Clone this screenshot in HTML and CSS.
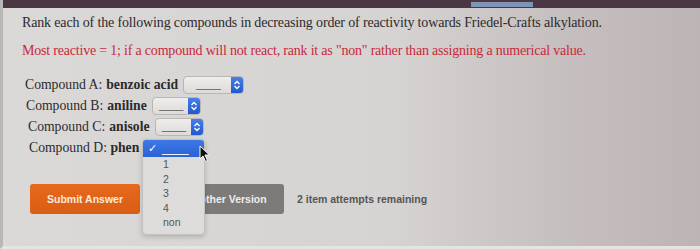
FILE: index.html
```html
<!DOCTYPE html>
<html>
<head>
<meta charset="utf-8">
<link rel="stylesheet" href="styles.css">
</head>
<body>
<div class="page">
  <div class="topbar"><span class="tab"></span></div>
  <div class="content">
    <p class="q">Rank each of the following compounds in decreasing order of reactivity towards Friedel-Crafts alkylation.</p>
    <p class="note">Most reactive = 1; if a compound will not react, rank it as "non" rather than assigning a numerical value.</p>
    <div class="list">
      <div class="row row-a">Compound A: <b>benzoic acid</b>
        <span class="sel"><span class="blank">____</span><span class="arrows"><svg width="8" height="10" viewBox="0 0 8 10"><path d="M1.5 4 L4 1.5 L6.5 4 M1.5 6 L4 8.5 L6.5 6" fill="none" stroke="#fff" stroke-width="1.3"/></svg></span></span>
      </div>
      <div class="row row-b">Compound B: <b>aniline</b>
        <span class="sel"><span class="blank">____</span><span class="arrows"><svg width="8" height="10" viewBox="0 0 8 10"><path d="M1.5 4 L4 1.5 L6.5 4 M1.5 6 L4 8.5 L6.5 6" fill="none" stroke="#fff" stroke-width="1.3"/></svg></span></span>
      </div>
      <div class="row row-c">Compound C: <b>anisole</b>
        <span class="sel"><span class="blank">____</span><span class="arrows"><svg width="8" height="10" viewBox="0 0 8 10"><path d="M1.5 4 L4 1.5 L6.5 4 M1.5 6 L4 8.5 L6.5 6" fill="none" stroke="#fff" stroke-width="1.3"/></svg></span></span>
      </div>
      <div class="row row-d"><span class="dlabel">Compound D: <b>phen</b></span>
        <div class="menu">
          <div class="opt current"><span class="check">✓</span><span class="uline">____</span></div>
          <div class="opt">1</div>
          <div class="opt">2</div>
          <div class="opt">3</div>
          <div class="opt">4</div>
          <div class="opt">non</div>
          <svg class="cursor" width="12" height="18" viewBox="0 0 12 18"><path d="M1 1 L1 14 L4 11 L6.5 16.5 L8.5 15.5 L6 10 L10.5 10 Z" fill="#111" stroke="#fff" stroke-width="1"/></svg>
        </div>
      </div>
    </div>
    <div class="actions">
      <span class="btn submit">Submit Answer</span>
      <span class="btn other">Try Another Version</span>
      <span class="attempts">2 item attempts remaining</span>
    </div>
  </div>
</div>
</body>
</html>
```
FILE: styles.css
```css
html, body {
  margin: 0;
  padding: 0;
}
body {
  width: 700px;
  height: 249px;
  overflow: hidden;
}
.page {
  width: 700px;
  height: 249px;
  background: linear-gradient(90deg, #dad9d7 0%, #d6d4d2 55%, #c6bfbf 80%, #bdb4b5 100%);
  position: relative;
  overflow: hidden;
  border-left: 3px solid #b9b7b6;
  border-bottom: 3px solid #e6e4e2;
  box-sizing: border-box;
}
.topbar {
  height: 8px;
  background: #4b3744;
  display: flex;
  align-items: flex-start;
}
.tab {
  margin-left: 468px;
  width: 62px;
  height: 5px;
  margin-top: 2px;
  background: #7f93b4;
}
.content {
  padding: 7px 0 0 19px;
  font-family: "Liberation Serif", "Times New Roman", serif;
  font-size: 14px;
  color: #2c2a2c;
}
.q {
  margin: 0;
  letter-spacing: -0.15px;
}
.note {
  margin: 12px 0 0;
  color: #c9283c;
  letter-spacing: -0.2px;
}
.list {
  margin-top: 16px;
  display: flex;
  flex-direction: column;
  gap: 2px;
  font-size: 13.7px;
}
.row {
  display: flex;
  align-items: center;
  height: 19px;
  white-space: nowrap;
  position: relative;
}
.row b {
  margin-left: 4px;
}
.row .dlabel b {
  margin-left: 0;
}
.row-a { padding-left: 3px; }
.row-b { padding-left: 4px; }
.row-c { padding-left: 6px; }
.row-d { padding-left: 7px; }
.sel {
  display: inline-flex;
  align-items: stretch;
  height: 18px;
  margin-left: 5px;
  border: 1px solid #b9b7b5;
  border-radius: 4px;
  background: linear-gradient(#efeeec, #dcdbd9);
  overflow: hidden;
  box-sizing: border-box;
}
.row-a .sel { width: 61px; }
.row-b .sel, .row-c .sel { width: 49px; }
.blank {
  flex: 1;
  font-family: "Liberation Sans", Arial, sans-serif;
  font-size: 11px;
  line-height: 14px;
  color: #555;
  text-align: center;
  padding-left: 2px;
}
.arrows {
  width: 12px;
  background: linear-gradient(#4a7fe6, #2059cf);
  display: flex;
  align-items: center;
  justify-content: center;
}
.menu {
  position: absolute;
  left: 120px;
  top: 1px;
  width: 61px;
  padding: 0 0 4px;
  background: #dddcdb;
  border: 1px solid #c4c2c0;
  border-radius: 4px;
  box-shadow: 0 2px 5px rgba(0,0,0,0.18);
  font-family: "Liberation Sans", Arial, sans-serif;
  font-size: 10.5px;
  color: #555;
  z-index: 2;
}
.opt {
  height: 14.5px;
  line-height: 14.5px;
  padding-left: 20px;
}
.opt.current {
  height: 17px;
  line-height: 17px;
  background: linear-gradient(#3d78e6, #2a63d4);
  color: #fff;
  border-radius: 3px 3px 0 0;
  padding-left: 5px;
  display: flex;
  align-items: center;
  gap: 5px;
}
.check {
  font-size: 11px;
}
.uline {
  font-size: 12px;
  line-height: 11px;
}
.cursor {
  position: absolute;
  left: 56px;
  top: 5px;
}
.actions {
  margin-top: 27px;
  padding-left: 8px;
  display: flex;
  align-items: center;
  font-family: "Liberation Sans", Arial, sans-serif;
  font-weight: bold;
  font-size: 10.5px;
}
.btn {
  height: 30px;
  line-height: 30px;
  border-radius: 3px;
  color: #fff;
  text-align: center;
  box-sizing: border-box;
  flex: none;
}
.submit {
  width: 110px;
  background: linear-gradient(#e8691c, #d95d14);
  color: #fbe9dc;
}
.other {
  width: 134px;
  margin-left: 10px;
  background: #7d7a7a;
  color: #eee;
}
.attempts {
  margin-left: 13px;
  color: #555;
}
```
